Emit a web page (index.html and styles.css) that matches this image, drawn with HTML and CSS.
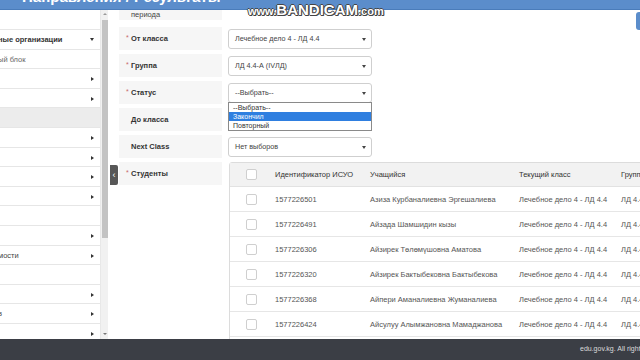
FILE: index.html
```html
<!DOCTYPE html>
<html>
<head>
    <title>Перевод учащихся</title>
    <link rel="stylesheet" href="styles.css">
</head>
<body>
    <div class="topbar">
        <div class="topbar-title">Направления / Результаты</div>
    </div>

    <div class="middle">
        <aside class="sidebar">
            <ul class="menu">
                <li class="menu-item"></li>
                <li class="menu-item bold">ные организации <span class="caret-down"></span></li>
                <li class="menu-item sub">ый блок</li>
                <li class="menu-item"><span class="caret-right"></span></li>
                <li class="menu-item"><span class="caret-right"></span></li>
                <li class="menu-item active"></li>
                <li class="menu-item"><span class="caret-right"></span></li>
                <li class="menu-item"><span class="caret-right"></span></li>
                <li class="menu-item"><span class="caret-right"></span></li>
                <li class="menu-item"><span class="caret-right"></span></li>
                <li class="menu-item"></li>
                <li class="menu-item"><span class="caret-right"></span></li>
                <li class="menu-item">мости <span class="caret-right"></span></li>
                <li class="menu-item"></li>
                <li class="menu-item"><span class="caret-right"></span></li>
                <li class="menu-item">в <span class="caret-right"></span></li>
                <li class="menu-item"><span class="caret-right"></span></li>
            </ul>
            <div class="scrollbar">
                <span class="sb-up"></span>
                <div class="sb-thumb"></div>
                <span class="sb-down"></span>
            </div>
        </aside>

        <main class="main">
            <button class="toggle">&lsaquo;</button>
            <button class="top-btn"></button>

            <div class="form">
                <div class="form-row first">
                    <div class="label two-line"><span class="req"></span><span>Дата окончания<br>периода</span></div>
                </div>
                <div class="form-row">
                    <div class="label"><span class="req">*</span>От класса</div>
                    <div class="control"><div class="select">Лечебное дело 4 - ЛД 4.4<span class="arrow"></span></div></div>
                </div>
                <div class="form-row">
                    <div class="label"><span class="req">*</span>Группа</div>
                    <div class="control"><div class="select">ЛД 4.4-А (IVЛД)<span class="arrow"></span></div></div>
                </div>
                <div class="form-row">
                    <div class="label"><span class="req">*</span>Статус</div>
                    <div class="control">
                        <div class="select">--Выбрать--<span class="arrow"></span></div>
                        <ul class="dropdown">
                            <li>--Выбрать--</li>
                            <li class="selected">Закончил</li>
                            <li>Повторный</li>
                        </ul>
                    </div>
                </div>
                <div class="form-row">
                    <div class="label"><span class="req"></span>До класса</div>
                    <div class="control"></div>
                </div>
                <div class="form-row">
                    <div class="label"><span class="req"></span>Next Class</div>
                    <div class="control"><div class="select">Нет выборов<span class="arrow"></span></div></div>
                </div>
                <div class="form-row">
                    <div class="label"><span class="req">*</span>Студенты</div>
                    <div class="table-wrap">
                        <table class="students">
                            <thead>
                                <tr>
                                    <th class="c-check"><span class="checkbox"></span></th>
                                    <th class="c-id">Идентификатор ИСУО</th>
                                    <th class="c-name">Учащийся</th>
                                    <th class="c-class">Текущий класс</th>
                                    <th class="c-group">Группа</th>
                                </tr>
                            </thead>
                            <tbody>
                                <tr>
                                    <td class="c-check"><span class="checkbox"></span></td>
                                    <td>1577226501</td>
                                    <td>Азиза Курбаналиевна Эргешалиева</td>
                                    <td>Лечебное дело 4 - ЛД 4.4</td>
                                    <td>ЛД 4.4-А (IVЛД)</td>
                                </tr>
                                <tr>
                                    <td class="c-check"><span class="checkbox"></span></td>
                                    <td>1577226491</td>
                                    <td>Айзада Шамшидин кызы</td>
                                    <td>Лечебное дело 4 - ЛД 4.4</td>
                                    <td>ЛД 4.4-А (IVЛД)</td>
                                </tr>
                                <tr>
                                    <td class="c-check"><span class="checkbox"></span></td>
                                    <td>1577226306</td>
                                    <td>Айзирек Төлөмүшовна Аматова</td>
                                    <td>Лечебное дело 4 - ЛД 4.4</td>
                                    <td>ЛД 4.4-А (IVЛД)</td>
                                </tr>
                                <tr>
                                    <td class="c-check"><span class="checkbox"></span></td>
                                    <td>1577226320</td>
                                    <td>Айзирек Бактыбековна Бактыбекова</td>
                                    <td>Лечебное дело 4 - ЛД 4.4</td>
                                    <td>ЛД 4.4-А (IVЛД)</td>
                                </tr>
                                <tr>
                                    <td class="c-check"><span class="checkbox"></span></td>
                                    <td>1577226368</td>
                                    <td>Айпери Аманалиевна Жуманалиева</td>
                                    <td>Лечебное дело 4 - ЛД 4.4</td>
                                    <td>ЛД 4.4-А (IVЛД)</td>
                                </tr>
                                <tr>
                                    <td class="c-check"><span class="checkbox"></span></td>
                                    <td>1577226424</td>
                                    <td>Айсулуу Алымжановна Мамаджанова</td>
                                    <td>Лечебное дело 4 - ЛД 4.4</td>
                                    <td>ЛД 4.4-А (IVЛД)</td>
                                </tr>
                                <tr>
                                    <td class="c-check"><span class="checkbox"></span></td>
                                    <td>1577226410</td>
                                    <td>Айчүрөк Маратовна</td>
                                    <td>Лечебное дело 4 - ЛД 4.4</td>
                                    <td>ЛД 4.4-А (IVЛД)</td>
                                </tr>
                            </tbody>
                        </table>
                    </div>
                </div>
            </div>
        </main>
    </div>

    <footer class="footer">
        <span class="footer-text">edu.gov.kg. All rights reserved.</span>
    </footer>

    <div class="watermark"><span class="wm-small">www.</span>BANDICAM<span class="wm-small">.com</span></div>

    <svg class="cursor" width="10" height="14" viewBox="0 0 10 14">
        <path d="M1 1 L1 11 L3.5 8.8 L5.3 12.8 L7 12 L5.3 8.2 L8.5 8.2 Z" fill="#111" stroke="#fff" stroke-width="0.9"/>
    </svg>
</body>
</html>
```

FILE: styles.css
```css
body {
    margin: 0;
    width: 640px;
    height: 360px;
    overflow: hidden;
    font-family: "Liberation Sans", Arial, sans-serif;
    color: #333;
    background: #fff;
    display: flex;
    flex-direction: column;
}

/* top header, scrolled so only the bottom shows */
.topbar {
    height: 10px;
    background: #5b8dcb;
    border-bottom: 1px solid #4a7cba;
    overflow: hidden;
    flex-shrink: 0;
    box-sizing: border-box;
}
.topbar-title {
    margin-top: -11px;
    margin-left: 22px;
    color: #fff;
    font-size: 15px;
    font-weight: bold;
    line-height: 16px;
    white-space: nowrap;
}

.middle {
    display: flex;
    height: 329px;
    flex-shrink: 0;
}

/* sidebar */
.sidebar {
    width: 108px;
    display: flex;
    flex-shrink: 0;
    overflow: hidden;
}
.menu {
    list-style: none;
    margin: 0;
    padding: 0;
    width: 100px;
    flex-shrink: 0;
}
.menu-item {
    height: 19.6px;
    box-sizing: border-box;
    border-bottom: 1.5px solid #e6e6e6;
    font-size: 7.5px;
    line-height: 20px;
    color: #444;
    white-space: nowrap;
    position: relative;
    text-indent: -2px;
}
.menu-item:first-child {
    height: 20px;
}
.menu-item.bold {
    font-weight: bold;
    color: #333;
}
.menu-item.sub {
    color: #666;
}
.menu-item.active {
    background: #ececec;
}
.caret-right,
.caret-down {
    position: absolute;
    left: 91px;
    top: 8px;
    width: 0;
    height: 0;
}
.caret-right {
    border-left: 3px solid #333;
    border-top: 2px solid transparent;
    border-bottom: 2px solid transparent;
}
.caret-down {
    left: 90px;
    border-top: 3px solid #333;
    border-left: 2px solid transparent;
    border-right: 2px solid transparent;
}

.scrollbar {
    width: 8px;
    background: #f1f1f1;
    display: flex;
    flex-direction: column;
    align-items: center;
    border-left: 1px solid #e8e8e8;
}
.sb-up,
.sb-down {
    width: 0;
    height: 0;
    border-left: 2px solid transparent;
    border-right: 2px solid transparent;
}
.sb-up {
    margin-top: 3px;
    border-bottom: 2px solid #999;
}
.sb-thumb {
    width: 6px;
    height: 218px;
    margin-top: 5px;
    background: #c3c3c3;
}
.sb-down {
    margin-top: auto;
    margin-bottom: 4px;
    border-top: 2px solid #777;
}

/* main */
.main {
    flex: 1;
    position: relative;
    overflow: hidden;
}
.toggle {
    position: absolute;
    left: 2px;
    top: 155px;
    width: 8px;
    height: 20px;
    padding: 0;
    border: none;
    border-radius: 0 2px 2px 0;
    background: #575757;
    color: #fff;
    font-size: 9px;
    line-height: 18px;
    z-index: 2;
}
.top-btn {
    position: absolute;
    left: 528px;
    top: 2px;
    width: 40px;
    height: 18px;
    border: none;
    border-radius: 3px;
    background: #5b8dcb;
}

.form {
    margin-top: -13px;
    padding-left: 11px;
}
.form-row {
    display: flex;
    gap: 6px;
    margin-bottom: 4px;
}
.form-row.first {
    margin-bottom: 7px;
}
.label {
    width: 103px;
    height: 23px;
    flex-shrink: 0;
    background: #f6f6f6;
    font-size: 7.5px;
    font-weight: bold;
    color: #333;
    display: flex;
    align-items: center;
    padding-left: 7px;
    box-sizing: border-box;
}
.label.two-line {
    line-height: 10px;
    font-weight: normal;
    color: #444;
    padding-top: 2px;
}
.req {
    width: 5px;
    flex-shrink: 0;
    color: #c96a6a;
    font-weight: normal;
    font-size: 7px;
    margin-top: -2px;
}
.control {
    width: 144px;
    padding-top: 2px;
    position: relative;
}
.select {
    height: 20px;
    box-sizing: border-box;
    border: 1px solid #cfcfcf;
    border-radius: 3px;
    background: #fff;
    padding-left: 6px;
    font-size: 7.2px;
    line-height: 18px;
    color: #444;
    position: relative;
}
.arrow {
    position: absolute;
    right: 5px;
    top: 8px;
    width: 0;
    height: 0;
    border-top: 3px solid #444;
    border-left: 2.5px solid transparent;
    border-right: 2.5px solid transparent;
}
.dropdown {
    position: absolute;
    left: 0;
    top: 21px;
    width: 144px;
    box-sizing: border-box;
    margin: 0;
    padding: 0;
    list-style: none;
    background: #fff;
    border: 1px solid #8a8a8a;
    font-size: 7px;
    color: #333;
    z-index: 3;
}
.dropdown li {
    height: 9px;
    line-height: 9px;
    padding-left: 4px;
}
.dropdown li.selected {
    background: #2f7fe0;
    color: #fff;
}

/* students table */
.table-wrap {
    margin-left: 1px;
}
.students {
    width: 490px;
    border-collapse: separate;
    border-spacing: 0;
    border: 1px solid #dcdcdc;
    border-radius: 3px;
    font-size: 7.5px;
    table-layout: fixed;
}
.students th {
    height: 24px;
    background: #f2f2f2;
    font-weight: normal;
    color: #333;
    text-align: left;
    padding: 0 6px;
    border-bottom: 1px solid #e2e2e2;
}
.students td {
    height: 24px;
    color: #555;
    padding: 0 6px;
    border-bottom: 1px solid #e6e6e6;
    white-space: nowrap;
}
.students .c-check {
    width: 39px;
    padding: 0 0 0 16px;
    box-sizing: border-box;
}
.students .c-id { width: 95px; box-sizing: border-box; }
.students .c-name { width: 149px; box-sizing: border-box; }
.students .c-class { width: 102px; box-sizing: border-box; }
.students .c-group { width: 105px; box-sizing: border-box; }
.checkbox {
    display: block;
    width: 11px;
    height: 11px;
    box-sizing: border-box;
    border: 1px solid #cfcfcf;
    border-radius: 2px;
    background: #fff;
}

/* footer */
.footer {
    height: 21px;
    flex-shrink: 0;
    background: #3b3e45;
    overflow: hidden;
}
.footer-text {
    display: block;
    margin-left: 580px;
    font-size: 7px;
    line-height: 20px;
    color: #dcdcdc;
    white-space: nowrap;
}

/* screen recorder overlay */
.watermark {
    position: absolute;
    left: 248px;
    top: 2px;
    font-family: "Liberation Sans", Arial, sans-serif;
    font-weight: bold;
    font-size: 15px;
    line-height: 16px;
    color: #fff;
    text-shadow: 1px 0 0 #444, -1px 0 0 #444, 0 1px 0 #444, 0 -1px 0 #444, 1px 1px 0 #444;
    white-space: nowrap;
}
.wm-small {
    font-size: 11px;
}
.cursor {
    position: absolute;
    left: 253px;
    top: 116px;
}
```
